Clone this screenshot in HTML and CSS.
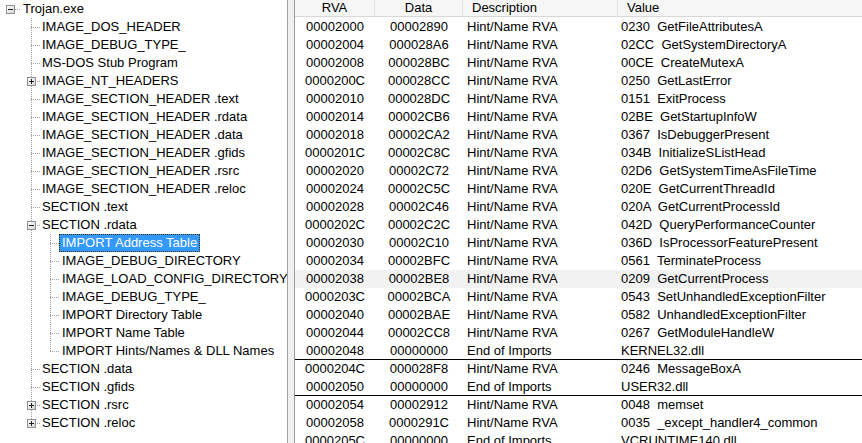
FILE: index.html
```html
<!DOCTYPE html>
<html>
<head>
<meta charset="utf-8">
<link rel="stylesheet" href="styles.css">
</head>
<body>
<div class="app">
  <div class="tree">
    <svg class="tree-lines" width="287" height="443" viewBox="0 0 287 443">
      <defs>
        <linearGradient id="bx" x1="0" y1="0" x2="1" y2="1">
          <stop offset="0" stop-color="#ffffff"/>
          <stop offset="1" stop-color="#d6d6d6"/>
        </linearGradient>
      </defs>
      <g class="dots">
        <path d="M15 9.5H20"/>
        <path d="M31.5 18V424"/>
        <path d="M31 27.5H40M31 45.5H40M31 63.5H40M31 81.5H40M31 99.5H40M31 117.5H40M31 135.5H40M31 153.5H40M31 171.5H40M31 189.5H40M31 207.5H40M31 225.5H40M31 369.5H40M31 387.5H40M31 405.5H40M31 423.5H40"/>
        <path d="M50.5 234V352"/>
        <path d="M50 243.5H59M50 261.5H59M50 279.5H59M50 297.5H59M50 315.5H59M50 333.5H59M50 351.5H59"/>
      </g>
      <g class="box">
        <rect x="6.5" y="5.5" width="8" height="8"/>
        <rect x="27.5" y="77.5" width="8" height="8"/>
        <rect x="27.5" y="221.5" width="8" height="8"/>
        <rect x="27.5" y="401.5" width="8" height="8"/>
        <rect x="27.5" y="419.5" width="8" height="8"/>
      </g>
      <g class="sign">
        <path d="M8 9.5H13"/>
        <path d="M29 81.5H34M31.5 79V84"/>
        <path d="M29 225.5H34"/>
        <path d="M29 405.5H34M31.5 403V408"/>
        <path d="M29 423.5H34M31.5 421V426"/>
      </g>
    </svg>
    <div class="node l0"><span class="label">Trojan.exe</span></div>
    <div class="node l1"><span class="label">IMAGE_DOS_HEADER</span></div>
    <div class="node l1"><span class="label">IMAGE_DEBUG_TYPE_</span></div>
    <div class="node l1"><span class="label">MS-DOS Stub Program</span></div>
    <div class="node l1"><span class="label">IMAGE_NT_HEADERS</span></div>
    <div class="node l1"><span class="label">IMAGE_SECTION_HEADER .text</span></div>
    <div class="node l1"><span class="label">IMAGE_SECTION_HEADER .rdata</span></div>
    <div class="node l1"><span class="label">IMAGE_SECTION_HEADER .data</span></div>
    <div class="node l1"><span class="label">IMAGE_SECTION_HEADER .gfids</span></div>
    <div class="node l1"><span class="label">IMAGE_SECTION_HEADER .rsrc</span></div>
    <div class="node l1"><span class="label">IMAGE_SECTION_HEADER .reloc</span></div>
    <div class="node l1"><span class="label">SECTION .text</span></div>
    <div class="node l1"><span class="label">SECTION .rdata</span></div>
    <div class="node l2 selected"><span class="label">IMPORT Address Table</span></div>
    <div class="node l2"><span class="label">IMAGE_DEBUG_DIRECTORY</span></div>
    <div class="node l2"><span class="label">IMAGE_LOAD_CONFIG_DIRECTORY</span></div>
    <div class="node l2"><span class="label">IMAGE_DEBUG_TYPE_</span></div>
    <div class="node l2"><span class="label">IMPORT Directory Table</span></div>
    <div class="node l2"><span class="label">IMPORT Name Table</span></div>
    <div class="node l2"><span class="label">IMPORT Hints/Names &amp; DLL Names</span></div>
    <div class="node l1"><span class="label">SECTION .data</span></div>
    <div class="node l1"><span class="label">SECTION .gfids</span></div>
    <div class="node l1"><span class="label">SECTION .rsrc</span></div>
    <div class="node l1"><span class="label">SECTION .reloc</span></div>
  </div>
  <div class="splitter"></div>
  <div class="list">
    <div class="head">
      <div class="h c1">RVA</div>
      <div class="h c2">Data</div>
      <div class="h c3">Description</div>
      <div class="h c4">Value</div>
    </div>
    <div class="row"><div class="c1">00002000</div><div class="c2">00002890</div><div class="c3">Hint/Name RVA</div><div class="c4">0230  GetFileAttributesA</div></div>
    <div class="row"><div class="c1">00002004</div><div class="c2">000028A6</div><div class="c3">Hint/Name RVA</div><div class="c4">02CC  GetSystemDirectoryA</div></div>
    <div class="row"><div class="c1">00002008</div><div class="c2">000028BC</div><div class="c3">Hint/Name RVA</div><div class="c4">00CE  CreateMutexA</div></div>
    <div class="row"><div class="c1">0000200C</div><div class="c2">000028CC</div><div class="c3">Hint/Name RVA</div><div class="c4">0250  GetLastError</div></div>
    <div class="row"><div class="c1">00002010</div><div class="c2">000028DC</div><div class="c3">Hint/Name RVA</div><div class="c4">0151  ExitProcess</div></div>
    <div class="row"><div class="c1">00002014</div><div class="c2">00002CB6</div><div class="c3">Hint/Name RVA</div><div class="c4">02BE  GetStartupInfoW</div></div>
    <div class="row"><div class="c1">00002018</div><div class="c2">00002CA2</div><div class="c3">Hint/Name RVA</div><div class="c4">0367  IsDebuggerPresent</div></div>
    <div class="row"><div class="c1">0000201C</div><div class="c2">00002C8C</div><div class="c3">Hint/Name RVA</div><div class="c4">034B  InitializeSListHead</div></div>
    <div class="row"><div class="c1">00002020</div><div class="c2">00002C72</div><div class="c3">Hint/Name RVA</div><div class="c4">02D6  GetSystemTimeAsFileTime</div></div>
    <div class="row"><div class="c1">00002024</div><div class="c2">00002C5C</div><div class="c3">Hint/Name RVA</div><div class="c4">020E  GetCurrentThreadId</div></div>
    <div class="row"><div class="c1">00002028</div><div class="c2">00002C46</div><div class="c3">Hint/Name RVA</div><div class="c4">020A  GetCurrentProcessId</div></div>
    <div class="row"><div class="c1">0000202C</div><div class="c2">00002C2C</div><div class="c3">Hint/Name RVA</div><div class="c4">042D  QueryPerformanceCounter</div></div>
    <div class="row"><div class="c1">00002030</div><div class="c2">00002C10</div><div class="c3">Hint/Name RVA</div><div class="c4">036D  IsProcessorFeaturePresent</div></div>
    <div class="row"><div class="c1">00002034</div><div class="c2">00002BFC</div><div class="c3">Hint/Name RVA</div><div class="c4">0561  TerminateProcess</div></div>
    <div class="row hover"><div class="c1">00002038</div><div class="c2">00002BE8</div><div class="c3">Hint/Name RVA</div><div class="c4">0209  GetCurrentProcess</div></div>
    <div class="row"><div class="c1">0000203C</div><div class="c2">00002BCA</div><div class="c3">Hint/Name RVA</div><div class="c4">0543  SetUnhandledExceptionFilter</div></div>
    <div class="row"><div class="c1">00002040</div><div class="c2">00002BAE</div><div class="c3">Hint/Name RVA</div><div class="c4">0582  UnhandledExceptionFilter</div></div>
    <div class="row"><div class="c1">00002044</div><div class="c2">00002CC8</div><div class="c3">Hint/Name RVA</div><div class="c4">0267  GetModuleHandleW</div></div>
    <div class="row sep"><div class="c1">00002048</div><div class="c2">00000000</div><div class="c3">End of Imports</div><div class="c4">KERNEL32.dll</div></div>
    <div class="row"><div class="c1">0000204C</div><div class="c2">000028F8</div><div class="c3">Hint/Name RVA</div><div class="c4">0246  MessageBoxA</div></div>
    <div class="row sep"><div class="c1">00002050</div><div class="c2">00000000</div><div class="c3">End of Imports</div><div class="c4">USER32.dll</div></div>
    <div class="row"><div class="c1">00002054</div><div class="c2">00002912</div><div class="c3">Hint/Name RVA</div><div class="c4">0048  memset</div></div>
    <div class="row"><div class="c1">00002058</div><div class="c2">0000291C</div><div class="c3">Hint/Name RVA</div><div class="c4">0035  _except_handler4_common</div></div>
    <div class="row"><div class="c1">0000205C</div><div class="c2">00000000</div><div class="c3">End of Imports</div><div class="c4">VCRUNTIME140.dll</div></div>
  </div>
</div>
</body>
</html>
```

FILE: styles.css
```css
html, body {
  margin: 0;
  padding: 0;
  height: 100%;
  overflow: hidden;
  background: #ffffff;
}

body {
  font-family: "Liberation Sans", Arial, sans-serif;
  font-size: 13px;
  color: #000000;
}

.app {
  display: flex;
  height: 443px;
  width: 862px;
  overflow: hidden;
}

/* ---------- tree ---------- */
.tree {
  position: relative;
  width: 287px;
  flex: 0 0 287px;
  border-right: 1px solid #a0a0a0;
  background: #ffffff;
  overflow: hidden;
}

.tree-lines {
  position: absolute;
  top: 0;
  left: 0;
  shape-rendering: crispEdges;
}

.tree-lines .dots path {
  fill: none;
  stroke: #a0a0a0;
  stroke-width: 1;
  stroke-dasharray: 1 1;
}

.tree-lines .box rect {
  fill: url(#bx);
  stroke: #8f8f8f;
  stroke-width: 1;
}

.tree-lines .sign path {
  fill: none;
  stroke: #1f1f1f;
  stroke-width: 1;
}

.node {
  position: relative;
  height: 18px;
  line-height: 18px;
  white-space: nowrap;
}

.node .label {
  display: inline-block;
  box-sizing: border-box;
  height: 18px;
  line-height: 16px;
  padding: 0 2px;
  border: 1px dotted transparent;
  vertical-align: top;
}

.l0 { padding-left: 20px; }
.l1 { padding-left: 39px; }
.l2 { padding-left: 59px; }

.node.selected .label {
  background: #3399ff;
  color: #ffffff;
  border-color: #3a2a10;
}

/* ---------- splitter ---------- */
.splitter {
  flex: 0 0 6px;
  background: #f0f0f0;
  border-right: 1px solid #9c9c9c;
}

/* ---------- list ---------- */
.list {
  flex: 1 1 auto;
  overflow: hidden;
  background: #ffffff;
}

.head,
.row {
  display: grid;
  grid-template-columns: 80px 88px 155px 1fr;
}

.head {
  height: 16px;
  line-height: 16px;
  background: #f6f6f6;
  border-bottom: 1px solid #d8d8d8;
  margin-bottom: 1px;
}

.head .h {
  border-right: 1px solid #e3e3e3;
  overflow: hidden;
  white-space: nowrap;
}

.head .c3,
.head .c4 {
  padding-left: 9px;
  text-align: left;
}

.head .c4 {
  border-right: none;
}

.row {
  height: 18px;
  line-height: 18px;
  white-space: pre;
  box-sizing: border-box;
}

.row.hover {
  background: #f2f2f2;
}

.row.sep {
  border-bottom: 1px solid #000000;
}

.c1,
.c2 {
  text-align: center;
}

.row .c3 {
  padding-left: 4px;
}

.row .c4 {
  padding-left: 3px;
}
```
